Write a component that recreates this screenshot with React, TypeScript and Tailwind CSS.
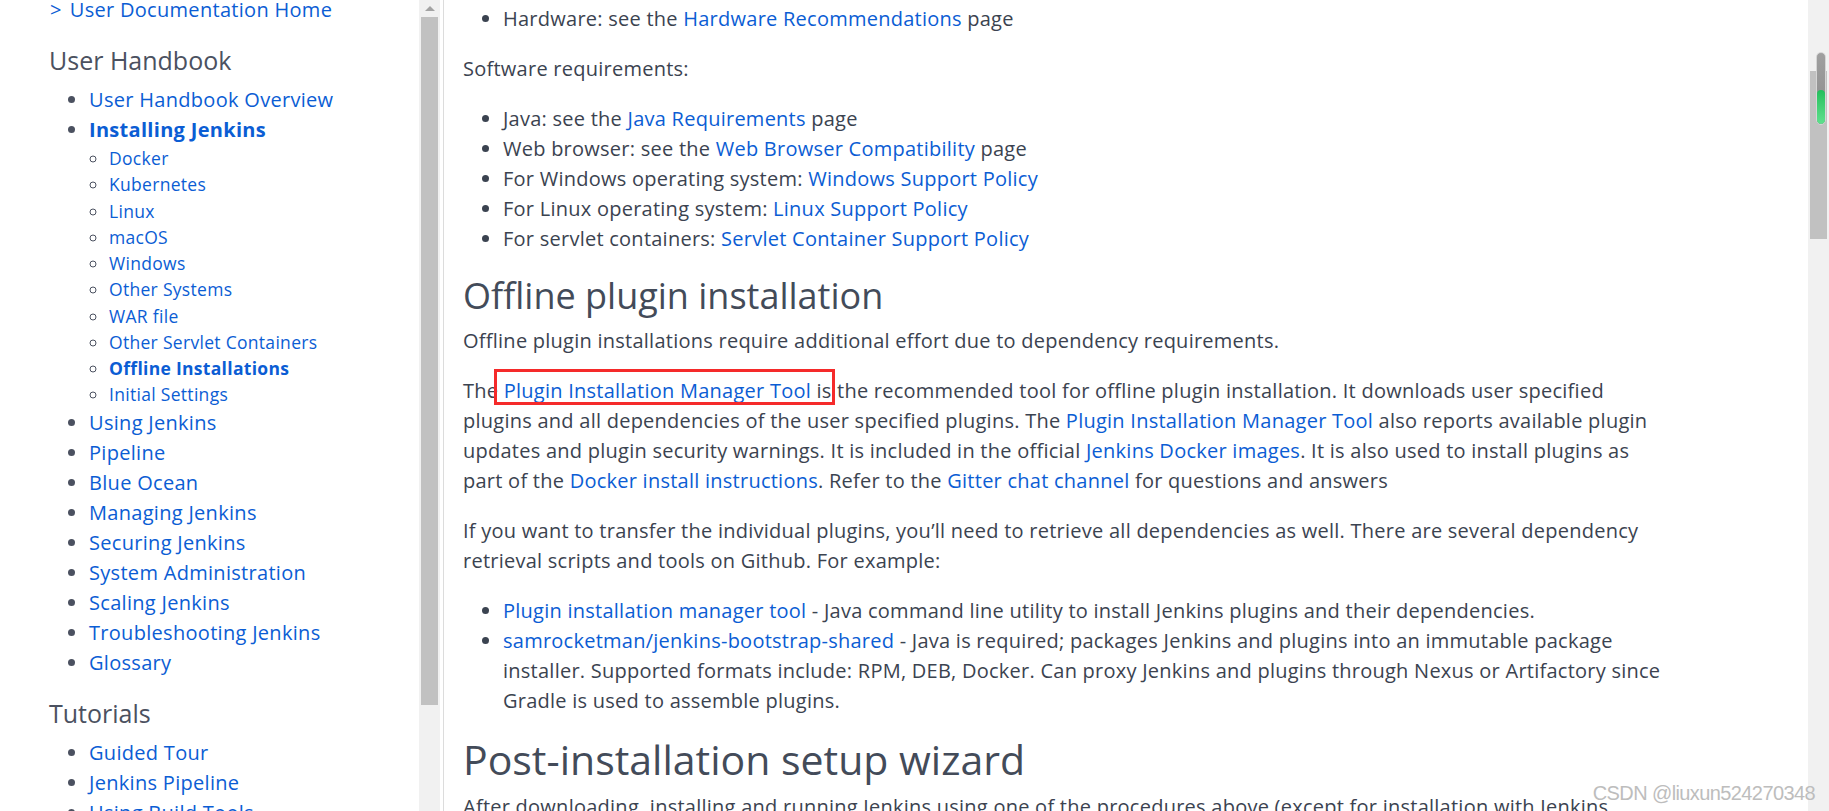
import type { ReactNode } from 'react';

type NavItem = { label: string; bold?: boolean; children?: NavItem[] };

const handbook: NavItem[] = [
  { label: 'User Handbook Overview' },
  {
    label: 'Installing Jenkins',
    bold: true,
    children: [
      { label: 'Docker' },
      { label: 'Kubernetes' },
      { label: 'Linux' },
      { label: 'macOS' },
      { label: 'Windows' },
      { label: 'Other Systems' },
      { label: 'WAR file' },
      { label: 'Other Servlet Containers' },
      { label: 'Offline Installations', bold: true },
      { label: 'Initial Settings' },
    ],
  },
  { label: 'Using Jenkins' },
  { label: 'Pipeline' },
  { label: 'Blue Ocean' },
  { label: 'Managing Jenkins' },
  { label: 'Securing Jenkins' },
  { label: 'System Administration' },
  { label: 'Scaling Jenkins' },
  { label: 'Troubleshooting Jenkins' },
  { label: 'Glossary' },
];

const tutorials: NavItem[] = [
  { label: 'Guided Tour' },
  { label: 'Jenkins Pipeline' },
  { label: 'Using Build Tools' },
];

const A = ({ children }: { children: ReactNode }) => (
  <a href="#" className="text-[#0b5dd4]">
    {children}
  </a>
);

const NavList = ({ items }: { items: NavItem[] }) => (
  <ul className="list-disc pl-[40px] marker:text-[#4b5160]">
    {items.map((item) => (
      <li key={item.label}>
        <A>{item.bold ? <strong className="font-bold">{item.label}</strong> : item.label}</A>
        {item.children && (
          <ul className="list-[circle] pl-[20px] text-[17.5px] leading-[26.25px]">
            {item.children.map((c) => (
              <li key={c.label}>
                <A>{c.bold ? <strong className="font-bold">{c.label}</strong> : c.label}</A>
              </li>
            ))}
          </ul>
        )}
      </li>
    ))}
  </ul>
);

const Sidebar = () => (
  <aside className="flex h-full w-[440px] shrink-0">
    <nav className="h-full w-[419px] overflow-hidden pl-[49px] tracking-[0.3px]">
      <div className="-mt-[5px] flex items-center text-[#0b5dd4]">
        <span className="ml-[1px]">&gt;</span>
        <span className="ml-[8px]">User Documentation Home</span>
      </div>
      <h3 className="mt-[18px] mb-[8px] text-[25px] leading-[34px] tracking-normal text-[#4b5160]">User Handbook</h3>
      <NavList items={handbook} />
      <h3 className="mt-[18px] mb-[8px] text-[25px] leading-[34px] tracking-normal text-[#4b5160]">Tutorials</h3>
      <NavList items={tutorials} />
    </nav>
    {/* sidebar scrollbar */}
    <div className="flex h-full w-[21px] flex-col bg-[#f1f1f1]">
      <div className="flex h-[17px] items-center justify-center">
        <div className="h-0 w-0 border-x-[5px] border-b-[5px] border-x-transparent border-b-[#a3a3a3]" />
      </div>
      <div className="mx-[2px] h-[688px] bg-[#c1c1c1]" />
    </div>
  </aside>
);

const PageScrollbar = () => (
  <div className="relative h-full w-[21px] shrink-0 bg-[#f1f1f1]">
    <div className="ml-[2px] mt-[71px] h-[168px] w-[17px] bg-[#c1c1c1]" />
    <div className="absolute left-[8px] top-[52px] flex h-[73px] w-[10px] flex-col justify-end overflow-hidden rounded-full border border-[#d6d6d6] bg-gradient-to-b from-[#a0a0a0] to-[#8a8a8a]">
      <div className="h-[34px] rounded-full bg-gradient-to-b from-[#1fbf5c] to-[#5fe08e]" />
    </div>
  </div>
);

export default function App() {
  return (
    <div className="relative flex h-[811px] w-full overflow-hidden bg-white font-['Open_Sans',sans-serif] text-[20px] leading-[30px] text-[#3b4350]">
      <Sidebar />
      <div className="w-[3px] shrink-0" />
      <div className="w-px shrink-0 bg-[#dcdcdc]" />

      <main className="min-w-0 flex-1 overflow-hidden whitespace-nowrap pl-[19px] pt-[4px] tracking-[0.25px]">
        <ul className="mb-[20px] list-disc pl-[40px]">
          <li>
            Hardware: see the <A>Hardware Recommendations</A> page
          </li>
        </ul>
        <p className="mb-[20px]">Software requirements:</p>
        <ul className="mb-[20px] list-disc pl-[40px]">
          <li>
            Java: see the <A>Java Requirements</A> page
          </li>
          <li>
            Web browser: see the <A>Web Browser Compatibility</A> page
          </li>
          <li>
            For Windows operating system: <A>Windows Support Policy</A>
          </li>
          <li>
            For Linux operating system: <A>Linux Support Policy</A>
          </li>
          <li>
            For servlet containers: <A>Servlet Container Support Policy</A>
          </li>
        </ul>

        <h3 className="mb-[9px] text-[36px] leading-[43px] tracking-normal text-[#434b59]">Offline plugin installation</h3>
        <p className="mb-[20px]">Offline plugin installations require additional effort due to dependency requirements.</p>
        <p className="mb-[20px]">
          The{' '}
          <span className="relative">
            <A>Plugin Installation Manager Tool</A> is
            {/* highlight box */}
            <span className="pointer-events-none absolute -left-[10px] -right-[3px] -top-[8px] -bottom-[1px] border-[3px] border-[#f52a2a]" />
          </span>{' '}
          the recommended tool for offline plugin installation. It downloads user specified
          <br />
          plugins and all dependencies of the user specified plugins. The <A>Plugin Installation Manager Tool</A> also
          reports available plugin
          <br />
          updates and plugin security warnings. It is included in the official <A>Jenkins Docker images</A>. It is also
          used to install plugins as
          <br />
          part of the <A>Docker install instructions</A>. Refer to the <A>Gitter chat channel</A> for questions and
          answers
        </p>
        <p className="mb-[20px]">
          If you want to transfer the individual plugins, you’ll need to retrieve all dependencies as well. There are
          several dependency
          <br />
          retrieval scripts and tools on Github. For example:
        </p>
        <ul className="mb-[18px] list-disc pl-[40px]">
          <li>
            <A>Plugin installation manager tool</A> - Java command line utility to install Jenkins plugins and their
            dependencies.
          </li>
          <li>
            <A>samrocketman/jenkins-bootstrap-shared</A> - Java is required; packages Jenkins and plugins into an
            immutable package
            <br />
            installer. Supported formats include: RPM, DEB, Docker. Can proxy Jenkins and plugins through Nexus or
            Artifactory since
            <br />
            Gradle is used to assemble plugins.
          </li>
        </ul>

        <h2 className="mb-[8px] text-[41px] leading-[50px] tracking-normal text-[#434b59]">Post-installation setup wizard</h2>
        <p>
          After downloading, installing and running Jenkins using one of the procedures above (except for installation
          with Jenkins
        </p>
      </main>

      <PageScrollbar />

      <div className="absolute bottom-[6px] right-[14px] font-['Liberation_Sans',sans-serif] text-[20px] leading-[24px] tracking-[-0.6px] text-[#bdbdbd]">
        CSDN @liuxun524270348
      </div>
    </div>
  );
}
